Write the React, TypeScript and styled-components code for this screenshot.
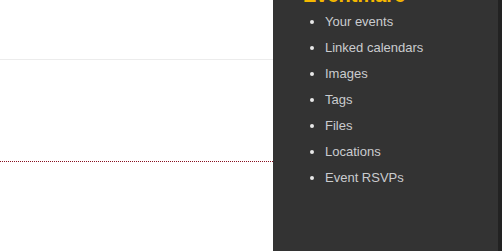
import styled, { createGlobalStyle } from "styled-components";

const GlobalStyle = createGlobalStyle`
  html, body {
    margin: 0;
    padding: 0;
    background: #fff;
    font-family: "Liberation Sans", Arial, sans-serif;
    overflow: hidden;
  }
`;

const links = [
  "Your events",
  "Linked calendars",
  "Images",
  "Tags",
  "Files",
  "Locations",
  "Event RSVPs",
];

const App = () => {
  return (
    <Page>
      <GlobalStyle />
      <Main>
        <TopBar />
        <Content />
      </Main>
      <Sidebar>
        <Heading>Eventmare</Heading>
        <LinkList>
          {links.map((l) => (
            <LinkItem key={l}>
              <a href="#">{l}</a>
            </LinkItem>
          ))}
        </LinkList>
      </Sidebar>
    </Page>
  );
};

export default App;

const Page = styled.div`
  display: flex;
  width: 502px;
  height: 251px;
  overflow: hidden;
`;

const Main = styled.div`
  width: 273px;
  display: flex;
  flex-direction: column;
`;

const TopBar = styled.div`
  height: 59px;
  border-bottom: 1px solid #ececec;
`;

const Content = styled.div`
  height: 101px;
  border-bottom: 1px dotted #8a1020;
`;

const Sidebar = styled.div`
  flex: 1;
  background: #333333;
  border-right: 4px solid #222222;
  padding: 0 0 0 30px;
`;

const Heading = styled.h2`
  margin: -15px 0 0 0;
  color: #f5b800;
  font-size: 20px;
  font-weight: bold;
  line-height: 20px;
`;

const LinkList = styled.ul`
  margin: 9px 0 0 0;
  padding: 0 0 0 22px;
  color: #e8e8e8;
  font-size: 13px;
`;

const LinkItem = styled.li`
  line-height: 16px;
  margin-bottom: 10px;

  a {
    color: #cacccf;
    text-decoration: none;
  }
`;
